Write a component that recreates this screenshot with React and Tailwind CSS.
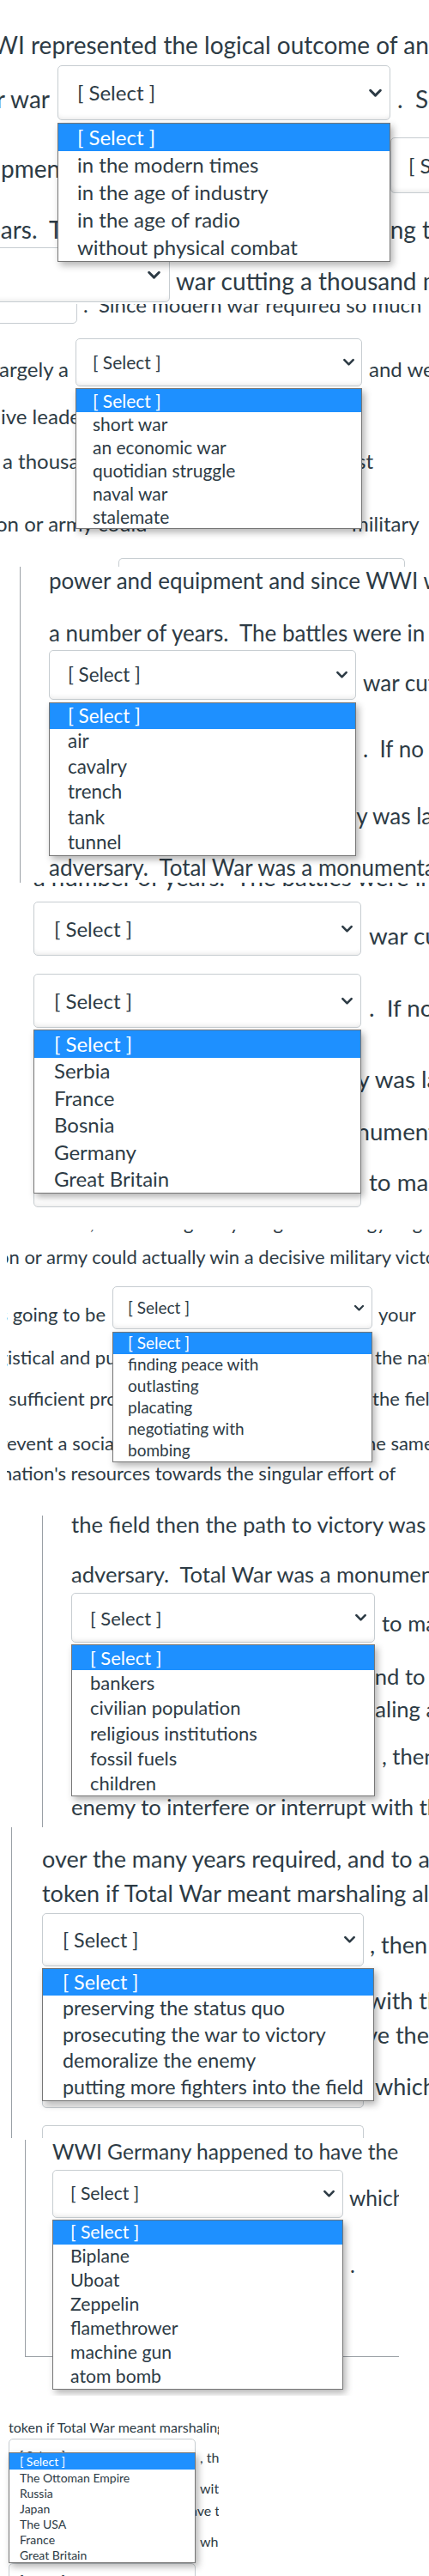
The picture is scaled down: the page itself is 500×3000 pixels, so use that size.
// Stacked crops of a fill-in-the-blank quiz page, each with an open native dropdown.

const ink = "text-[#2d3b45]";

function Chevron({ className = "" }) {
  return (
    <svg viewBox="0 0 16 10" className={`shrink-0 ${className}`} fill="none" stroke="currentColor" strokeWidth="2.8" strokeLinecap="round" strokeLinejoin="round">
      <path d="M2.5 2l5.5 5.5L13.5 2" />
    </svg>
  );
}

function SelectBox({ className = "", chev = "", label = "[ Select ]", noChev = false }) {
  return (
    <div className={`flex shrink-0 items-center justify-between rounded-[5px] border border-[#c7cdd1] bg-white shadow-[inset_0_-5px_5px_-3px_rgba(0,0,0,0.08)] ${className}`}>
      <span className="whitespace-pre">{label}</span>
      {!noChev && <Chevron className={chev} />}
    </div>
  );
}

function Menu({ options, className = "", row = "", pad = "" }) {
  return (
    <div className={`absolute z-10 border border-[#767676] bg-white shadow-[3px_4px_8px_rgba(0,0,0,0.3)] ${className}`}>
      {["[ Select ]", ...options].map((o, i) => (
        <div key={o} className={`flex items-center whitespace-pre ${row} ${pad} ${i === 0 ? "bg-[#1e90ff] text-white" : ""}`}>
          {o}
        </div>
      ))}
    </div>
  );
}

function Row({ className = "", children }) {
  return <div className={`flex shrink-0 items-center whitespace-pre ${className}`}>{children}</div>;
}

// fixed-width box; its text may be cut on the left (shift) and on the right (width)
function Clip({ w, shift = "", children }) {
  return (
    <div className={`shrink-0 overflow-hidden ${w}`}>
      <div className={`whitespace-pre ${shift}`}>{children}</div>
    </div>
  );
}

function PartOne() {
  return (
    <div className="relative flex h-[354px] flex-col overflow-hidden text-[28px]">
      <Row className="mt-[36px] h-[32px]">
        <span className="-ml-[8px]">WI represented the logical outcome of an</span>
      </Row>
      <Row className="mt-[8px] h-[64px]">
        <div className="mt-[14px] flex w-[67px] shrink-0 justify-end pr-[9px]">for war</div>
        <SelectBox className="h-[64px] w-[388px] pl-[22px] pr-[8px] text-[24px]" chev="h-[11px] w-[17px]" />
        <span className="ml-[8px] mt-[14px]">.  So</span>
      </Row>
      <Row className="mt-[20px] h-[65px]">
        <Clip w="w-[455px]" shift="ml-[1px] mt-[6px]">pment and weapons of</Clip>
        <SelectBox className="h-[65px] w-[300px] pl-[20px] text-[24px]" noChev />
      </Row>
      <Row className="mt-[27px] h-[30px]">
        <Clip w="w-[448px]" shift="-ml-[14px]">ears.  The armies were long</Clip>
        <span>ing the</span>
      </Row>
      <Row className="mt-[6px] h-[64px]">
        <SelectBox className="-ml-[200px] h-[64px] w-[398px] pr-[9px]" chev="h-[11px] w-[17px]" label="" />
        <span className="ml-[7px] mt-[14px]">war cutting a thousand miles</span>
      </Row>
      <Menu
        className="left-[67px] top-[143px] w-[388px] text-[24px]"
        row="h-[32px]"
        pad="pl-[22px]"
        options={["in the modern times", "in the age of industry", "in the age of radio", "without physical combat"]}
      />
    </div>
  );
}

function PartTwo() {
  return (
    <div className="relative flex h-[306px] flex-col overflow-hidden text-[24px]">
      <Row className="-mt-[23px] h-[46px]">
        <div className="-ml-[10px] h-[46px] w-[100px] shrink-0 rounded-[5px] border border-[#c7cdd1] bg-white" />
        <span className="ml-[7px] mt-[2px]">.  Since modern war required so much</span>
      </Row>
      <Row className="mt-[17px] h-[56px]">
        <div className="mt-[16px] flex w-[80px] shrink-0 justify-end">largely a</div>
        <SelectBox className="ml-[8px] h-[56px] w-[334px] pl-[19px] pr-[7px] text-[21px]" chev="h-[10px] w-[15px]" />
        <span className="ml-[8px] mt-[16px]">and were</span>
      </Row>
      <Row className="mt-[20px] h-[30px]">
        <Clip w="w-[420px]" shift="ml-[1px]">ive leadership and</Clip>
      </Row>
      <Row className="mt-[22px] h-[30px]">
        <Clip w="w-[416px]" shift="ml-[3px]">a thousand miles of</Clip>
        <span>st</span>
      </Row>
      <Row className="mt-[43px] h-[30px]">
        <Clip w="w-[410px]" shift="-ml-[5px]">on or army could</Clip>
        <span>military</span>
      </Row>
      <div className="ml-[138px] mt-[25px] h-[14px] w-[334px] shrink-0 rounded-t-[5px] border-x border-t border-[#c7cdd1]" />
      <Menu
        className="left-[88px] top-[98px] w-[334px] text-[21px]"
        row="h-[27px]"
        pad="pl-[19px]"
        options={["short war", "an economic war", "quotidian struggle", "naval war", "stalemate"]}
      />
    </div>
  );
}

function PartThree() {
  return (
    <div className="relative h-[368px] overflow-hidden text-[26px]">
      <div className="ml-[23px] flex h-full flex-col border-l border-[#9aa0a6] pl-[33px]">
        <Row className="h-[32px]">power and equipment and since WWI was</Row>
        <Row className="mt-[29px] h-[32px]">a number of years.  The battles were in</Row>
        <Row className="mt-[4px] h-[58px]">
          <SelectBox className="h-[58px] w-[358px] pl-[21px] pr-[8px] text-[22.4px]" chev="h-[10px] w-[15px]" />
          <span className="ml-[8px] mt-[18px]">war cutting</span>
        </Row>
        <Row className="mt-[42px] h-[30px]">
          <div className="w-[358px] shrink-0" />
          <span className="ml-[8px]">.  If no one</span>
        </Row>
        <Row className="mt-[48px] h-[30px]">
          <div className="w-[352px] shrink-0" />
          <span>ly was lasting</span>
        </Row>
        <Row className="mt-[30px] h-[30px]">adversary.  Total War was a monumental</Row>
      </div>
      <Menu
        className="left-[57px] top-[158px] w-[358px] text-[22.4px]"
        row="h-[29.5px]"
        pad="pl-[21px]"
        options={["air", "cavalry", "trench", "tank", "tunnel"]}
      />
    </div>
  );
}

function PartFour() {
  return (
    <div className="relative flex h-[404px] flex-col overflow-hidden pl-[39px] text-[27.7px]">
      <Row className="-mt-[22px] h-[32px]">a number of years.  The battles were in</Row>
      <Row className="mt-[12px] h-[63px]">
        <SelectBox className="h-[63px] w-[382px] pl-[23px] pr-[8px] text-[24px]" chev="h-[10px] w-[15px]" />
        <span className="ml-[9px] mt-[17px]">war cutting</span>
      </Row>
      <Row className="mt-[21px] h-[63px]">
        <SelectBox className="h-[63px] w-[382px] pl-[23px] pr-[8px] text-[24px]" chev="h-[10px] w-[15px]" />
        <span className="ml-[9px] mt-[17px]">.  If no one</span>
      </Row>
      <Row className="mt-[45px] h-[30px]">
        <div className="w-[371px] shrink-0" />
        <span>ly was lasting</span>
      </Row>
      <Row className="mt-[31px] h-[30px]">
        <div className="w-[338px] shrink-0" />
        <span>monumental</span>
      </Row>
      <Row className="mt-[10px] h-[63px]">
        <SelectBox className="h-[63px] w-[382px] pl-[23px] pr-[8px] text-[24px]" chev="h-[10px] w-[15px]" />
        <span className="ml-[9px] mt-[4px]">to make</span>
      </Row>
      <Menu
        className="left-[39px] top-[171px] w-[382px] text-[24px]"
        row="h-[31.5px]"
        pad="pl-[23px]"
        options={["Serbia", "France", "Bosnia", "Germany", "Great Britain"]}
      />
    </div>
  );
}

function PartFive() {
  return (
    <div className="relative ml-[8px] flex h-[333px] flex-col overflow-hidden text-[22px]">
      <Row className="-mt-[19px] h-[20px]">
        <span className="ml-[2px]">Therefore, the warring army sought a strategy of grinding</span>
      </Row>
      <Row className="mt-[19px] h-[22px]">
        <span className="-ml-[10px]">on or army could actually win a decisive military victory</span>
      </Row>
      <Row className="mt-[24px] h-[50px]">
        <div className="mt-[14px] flex w-[115px] shrink-0 justify-end">was going to be</div>
        <SelectBox className="ml-[8px] h-[50px] w-[303px] pl-[17px] pr-[8px] text-[19px]" chev="h-[9px] w-[13px]" />
        <span className="ml-[7px] mt-[14px]">your</span>
      </Row>
      <Row className="mt-[21px] h-[22px]">
        <Clip w="w-[429px]" shift="-ml-[28px]">logistical and public</Clip>
        <span>the nation</span>
      </Row>
      <Row className="mt-[26px] h-[22px]">
        <Clip w="w-[426px]" shift="ml-[2px]">sufficient production</Clip>
        <span>the field</span>
      </Row>
      <Row className="mt-[30px] h-[22px]">
        <Clip w="w-[410px]" shift="-ml-[20px]">prevent a social</Clip>
        <span>the same</span>
      </Row>
      <Row className="mt-[13px] h-[22px]">
        <span className="-ml-[6px]">nation's resources towards the singular effort of</span>
      </Row>
      <Menu
        className="left-[123px] top-[119px] w-[303px] text-[19px]"
        row="h-[25px]"
        pad="pl-[17px]"
        options={["finding peace with", "outlasting", "placating", "negotiating with", "bombing"]}
      />
    </div>
  );
}

function PartSix() {
  return (
    <div className="relative h-[363px] overflow-hidden text-[25.6px]">
      <div className="ml-[49px] flex h-full flex-col border-l border-[#9aa0a6] pl-[33px]">
        <Row className="-mt-[6px] h-[32px]">the field then the path to victory was</Row>
        <Row className="mt-[26px] h-[32px]">adversary.  Total War was a monumental</Row>
        <Row className="mt-[6px] h-[58px]">
          <SelectBox className="h-[58px] w-[354px] pl-[21px] pr-[8px] text-[22px]" chev="h-[10px] w-[15px]" />
          <span className="ml-[8px] mt-[12px]">to make</span>
        </Row>
        <Row className="mt-[24px] h-[30px]">
          <div className="w-[341px] shrink-0" />
          <span>and to</span>
        </Row>
        <Row className="mt-[8px] h-[30px]">
          <div className="w-[286px] shrink-0" />
          <span>marshaling all</span>
        </Row>
        <Row className="mt-[25px] h-[30px]">
          <div className="w-[362px] shrink-0" />
          <span>, then</span>
        </Row>
        <Row className="mt-[28px] h-[32px]">enemy to interfere or interrupt with the</Row>
      </div>
      <Menu
        className="left-[83px] top-[150px] w-[354px] text-[22px]"
        row="h-[29.2px]"
        pad="pl-[21px]"
        options={["bankers", "civilian population", "religious institutions", "fossil fuels", "children"]}
      />
    </div>
  );
}

function PartSeven() {
  return (
    <div className="relative h-[362px] overflow-hidden text-[27px]">
      <div className="ml-[13px] flex h-full flex-col border-l border-[#9aa0a6] pl-[35px]">
        <Row className="mt-[21px] h-[32px]">over the many years required, and to also</Row>
        <Row className="mt-[8px] h-[32px]">token if Total War meant marshaling all</Row>
        <Row className="mt-[7px] h-[62px]">
          <SelectBox className="h-[62px] w-[375px] pl-[23px] pr-[8px] text-[23.3px]" chev="h-[10px] w-[15px]" />
          <span className="ml-[7px] mt-[12px]">, then</span>
        </Row>
        <Row className="mt-[25px] h-[30px]">
          <div className="w-[380px] shrink-0" />
          <span>with the</span>
        </Row>
        <Row className="mt-[10px] h-[30px]">
          <div className="w-[349px] shrink-0" />
          <span>have the</span>
        </Row>
        <Row className="mt-[8px] h-[62px]">
          <SelectBox className="h-[62px] w-[375px] pl-[23px] pr-[8px] text-[23.3px]" chev="h-[10px] w-[15px]" />
          <span className="ml-[13px] mt-[12px]">which</span>
        </Row>
        <div className="mt-[20px] h-[20px] w-[375px] shrink-0 rounded-t-[5px] border-x border-t border-[#c7cdd1]" />
      </div>
      <Menu
        className="left-[49px] top-[164px] w-[387px] text-[23.3px]"
        row="h-[30.5px]"
        pad="pl-[23px]"
        options={["preserving the status quo", "prosecuting the war to victory", "demoralize the enemy", "putting more fighters into the field"]}
      />
    </div>
  );
}

function PartEight() {
  return (
    <div className="relative h-[300px] w-[465px] overflow-hidden text-[24.6px]">
      <div className="ml-[29px] mt-[2px] flex h-[253px] flex-col border-b border-l border-[#9aa0a6] pl-[31px]">
        <Row className="h-[28px]">WWI Germany happened to have the</Row>
        <Row className="mt-[7px] h-[56px]">
          <SelectBox className="h-[56px] w-[339px] pl-[20px] pr-[8px] text-[21.2px]" chev="h-[10px] w-[15px]" />
          <span className="ml-[7px] mt-[10px]">which</span>
        </Row>
        <Row className="mt-[40px] h-[30px]">
          <div className="w-[347px] shrink-0" />
          <span>.</span>
        </Row>
      </div>
      <Menu
        className="left-[61px] top-[95px] w-[339px] text-[21.2px]"
        row="h-[28px]"
        pad="pl-[20px]"
        options={["Biplane", "Uboat", "Zeppelin", "flamethrower", "machine gun", "atom bomb"]}
      />
    </div>
  );
}

function PartNine() {
  return (
    <div className="relative flex h-[210px] w-[255px] flex-col overflow-hidden pl-[10px] text-[16px]">
      <Row className="mt-[27px] h-[20px]">token if Total War meant marshaling all</Row>
      <Row className="mt-[3px] h-[38px]">
        <SelectBox className="h-[38px] w-[218px] pl-[12px] pr-[6px] text-[14px]" chev="h-[7px] w-[10px]" />
        <span className="ml-[5px] mt-[6px]">, then</span>
      </Row>
      <Row className="mt-[10px] h-[20px]">
        <div className="w-[223px] shrink-0" />
        <span>with</span>
      </Row>
      <Row className="mt-[6px] h-[20px]">
        <div className="w-[203px] shrink-0" />
        <span>have the</span>
      </Row>
      <Row className="mt-[16px] h-[20px]">
        <div className="w-[223px] shrink-0" />
        <span>which</span>
      </Row>
      <Row className="mt-[15px] h-[38px]">
        <SelectBox className="h-[38px] w-[218px] pl-[12px] pr-[6px] text-[14px]" chev="h-[7px] w-[10px]" />
      </Row>
      <Menu
        className="left-[10px] top-[66px] w-[218px] text-[14px]"
        row="h-[18px] first:h-[19px]"
        pad="pl-[12px]"
        options={["The Ottoman Empire", "Russia", "Japan", "The USA", "France", "Great Britain"]}
      />
    </div>
  );
}

export default function App() {
  return (
    <div className={`h-[3000px] w-[500px] overflow-hidden bg-white font-[Lato,sans-serif] ${ink}`}>
      <PartOne />
      <PartTwo />
      <PartThree />
      <PartFour />
      <PartFive />
      <PartSix />
      <PartSeven />
      <PartEight />
      <PartNine />
    </div>
  );
}
